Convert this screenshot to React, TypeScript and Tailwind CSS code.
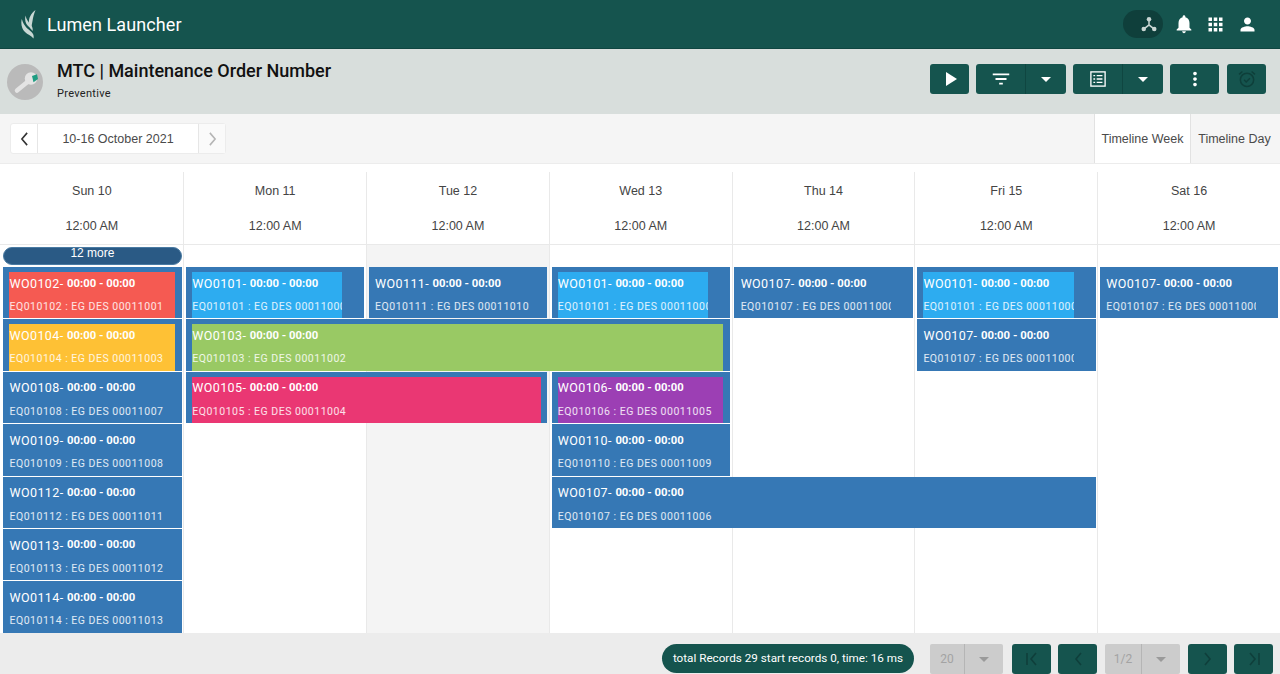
import React from 'react';

type Ev = {
  id: string;
  eq: string;
  pos: string;
  inner?: string;
  gap: string;
};

const days = ['Sun 10', 'Mon 11', 'Tue 12', 'Wed 13', 'Thu 14', 'Fri 15', 'Sat 16'];

const events: Ev[] = [
  { id: 'WO0102', eq: 'EQ010102 : EG DES 00011001', pos: 'col-start-1 row-start-2', inner: 'bg-[#f55a52]', gap: 'mr-[7px]' },
  { id: 'WO0101', eq: 'EQ010101 : EG DES 00011000', pos: 'col-start-2 row-start-2', inner: 'bg-[#2dacf0]', gap: 'mr-[22px]' },
  { id: 'WO0111', eq: 'EQ010111 : EG DES 00011010', pos: 'col-start-3 row-start-2', gap: 'mr-[7px]' },
  { id: 'WO0101', eq: 'EQ010101 : EG DES 00011000', pos: 'col-start-4 row-start-2', inner: 'bg-[#2dacf0]', gap: 'mr-[22px]' },
  { id: 'WO0107', eq: 'EQ010107 : EG DES 00011000', pos: 'col-start-5 row-start-2', gap: 'mr-[22px]' },
  { id: 'WO0101', eq: 'EQ010101 : EG DES 00011000', pos: 'col-start-6 row-start-2', inner: 'bg-[#2dacf0]', gap: 'mr-[22px]' },
  { id: 'WO0107', eq: 'EQ010107 : EG DES 00011000', pos: 'col-start-7 row-start-2', gap: 'mr-[22px]' },
  { id: 'WO0104', eq: 'EQ010104 : EG DES 00011003', pos: 'col-start-1 row-start-3', inner: 'bg-[#fec135]', gap: 'mr-[7px]' },
  { id: 'WO0103', eq: 'EQ010103 : EG DES 00011002', pos: 'col-start-2 col-span-3 row-start-3', inner: 'bg-[#99c964]', gap: 'mr-[6.500px]' },
  { id: 'WO0107', eq: 'EQ010107 : EG DES 00011000', pos: 'col-start-6 row-start-3', gap: 'mr-[22px]' },
  { id: 'WO0108', eq: 'EQ010108 : EG DES 00011007', pos: 'col-start-1 row-start-4', gap: 'mr-[7px]' },
  { id: 'WO0105', eq: 'EQ010105 : EG DES 00011004', pos: 'col-start-2 col-span-2 row-start-4', inner: 'bg-[#ea3773]', gap: 'mr-[6.500px]' },
  { id: 'WO0106', eq: 'EQ010106 : EG DES 00011005', pos: 'col-start-4 row-start-4', inner: 'bg-[#9c3fb4]', gap: 'mr-[6.500px]' },
  { id: 'WO0109', eq: 'EQ010109 : EG DES 00011008', pos: 'col-start-1 row-start-5', gap: 'mr-[7px]' },
  { id: 'WO0110', eq: 'EQ010110 : EG DES 00011009', pos: 'col-start-4 row-start-5', gap: 'mr-[6.500px]' },
  { id: 'WO0112', eq: 'EQ010112 : EG DES 00011011', pos: 'col-start-1 row-start-6', gap: 'mr-[7px]' },
  { id: 'WO0107', eq: 'EQ010107 : EG DES 00011006', pos: 'col-start-4 col-span-3 row-start-6', gap: 'mr-[6.500px]' },
  { id: 'WO0113', eq: 'EQ010113 : EG DES 00011012', pos: 'col-start-1 row-start-7', gap: 'mr-[7px]' },
  { id: 'WO0114', eq: 'EQ010114 : EG DES 00011013', pos: 'col-start-1 row-start-8', gap: 'mr-[7px]' },
];

const columns = [
  'col-start-1',
  'col-start-2 border-l',
  'col-start-3 border-l bg-[#f4f4f4]',
  'col-start-4 border-l',
  'col-start-5 border-l',
  'col-start-6 border-l',
  'col-start-7 border-l',
];

function Icon({ d, className }: { d: string; className: string }) {
  return (
    <svg viewBox="0 0 24 24" className={className} fill="currentColor">
      <path d={d} />
    </svg>
  );
}

function Caret() {
  return <div className="h-0 w-0 border-x-[5px] border-t-[5px] border-x-transparent border-t-white" />;
}

function EventBar({ ev }: { ev: Ev }) {
  return (
    <div className={`${ev.pos} z-10 mb-px ml-[2.7px] mr-[1.700px] min-w-0 bg-[#3678b5] pl-[6.300px] pt-[5px]`}>
      <div className={`${ev.gap} ${ev.inner ?? ''} h-full overflow-hidden whitespace-nowrap text-white`}>
        <div className="mt-[4px] flex h-[16px] items-center text-[12.5px] tracking-[0.4px]">
          <span>{ev.id}-&nbsp;</span>
          <span className="text-[11.3px] font-bold tracking-normal">00:00 - 00:00</span>
        </div>
        <div className="mt-[8px] text-[10.5px] leading-[14px] tracking-[0.5px] text-white/85">{ev.eq}</div>
      </div>
    </div>
  );
}

function PageButton({ children, className = 'w-[39px]' }: { children: React.ReactNode; className?: string }) {
  return (
    <div className={`${className} flex h-[30px] items-center justify-center rounded-[3px] bg-[#15544e] text-[#0f3f3b]`}>
      {children}
    </div>
  );
}

function PageSelect({ label, className }: { label: string; className: string }) {
  return (
    <div className={`${className} flex h-[30px] items-center rounded-[2px] bg-[#cccccc] text-[12px] text-[#a3a3a3]`}>
      <div className="flex h-full flex-1 items-center justify-center border-r border-[#b5b5b5]">{label}</div>
      <div className="flex w-[38px] justify-center">
        <div className="h-0 w-0 border-x-[5px] border-t-[5px] border-x-transparent border-t-[#9a9a9a]" />
      </div>
    </div>
  );
}

export default function App() {
  return (
    <div className="flex h-[674px] w-[1280px] flex-col overflow-hidden bg-white font-['Roboto',sans-serif]">
      {/* top bar */}
      <header className="flex h-[49px] shrink-0 items-center justify-between border-b border-[#0f4641] bg-[#15544e] pl-[21px] pr-[22px] text-white">
        <div className="flex items-center gap-[10px]">
          <svg viewBox="0 0 16 29" className="h-[29px] w-[16px]" fill="#c8d8d4">
            <path d="M14.500 0C10 3.500 7.500 8 8 13c.3 2 1 4 2 6 .5-3 1-5 1.500-8 .5-4 1.500-7 3-11z" />
            <path d="M.8 9C-.5 14 1 19 4 22c2.500 2.500 6 3.500 8.500 6.500.5-2.500 0-4.500-2-6.500C7.500 19 3 17 .8 9z" />
            <path d="M4.500 5.500C3.500 10 4.500 13.500 7 16c1.500 1.500 3 2.500 4.500 5 .5-2 0-4-1.500-6-2.500-3-4.500-5-5.500-9.500z" />
          </svg>
          <span className="text-[18px] tracking-[0.1px]">Lumen Launcher</span>
        </div>
        <div className="flex items-center">
          <div className="flex h-[28px] w-[40px] items-center justify-end rounded-full bg-[#0f3f3b] pr-[5px] text-[#c9d6d3]">
            <svg viewBox="0 0 24 24" className="h-[18px] w-[18px]" fill="currentColor">
              <circle cx="12" cy="5.500" r="3" />
              <circle cx="5" cy="18.500" r="3" />
              <circle cx="19" cy="18.500" r="3" />
              <path d="M11 8h2v4.500l5.500 4.500-1.300 1.500L12 14.500l-5.200 4L5.500 17l5.500-4.500z" />
            </svg>
          </div>
          <Icon
            className="ml-[10px] h-[22px] w-[22px]"
            d="M12 22c1.100 0 2-.9 2-2h-4c0 1.100.89 2 2 2zm6-6v-5c0-3.070-1.640-5.640-4.500-6.320V4c0-.83-.67-1.500-1.500-1.500s-1.500.67-1.500 1.500v.68C7.630 5.360 6 7.920 6 11v5l-2 2v1h16v-1l-2-2z"
          />
          <Icon
            className="ml-[10px] h-[21px] w-[21px]"
            d="M4 8h4V4H4v4zm6 12h4v-4h-4v4zm-6 0h4v-4H4v4zm0-6h4v-4H4v4zm6 0h4v-4h-4v4zm6-10v4h4V4h-4zm-6 4h4V4h-4v4zm6 6h4v-4h-4v4zm0 6h4v-4h-4v4z"
          />
          <Icon
            className="ml-[11px] h-[21px] w-[21px]"
            d="M12 12c2.210 0 4-1.790 4-4s-1.790-4-4-4-4 1.790-4 4 1.790 4 4 4zm0 2c-2.670 0-8 1.340-8 4v2h16v-2c0-2.660-5.330-4-8-4z"
          />
        </div>
      </header>

      {/* title toolbar */}
      <div className="flex h-[65px] shrink-0 items-center justify-between bg-[#d8dedc] pl-[7px] pr-[14px]">
        <div className="flex items-center gap-[14px]">
          <div className="flex h-[36px] w-[36px] items-center justify-center rounded-full bg-[#bababa]">
            <svg viewBox="0 0 36 36" className="h-[36px] w-[36px]">
              <path d="M10 26.500l11-9" stroke="#e4e4e4" strokeWidth="4.500" strokeLinecap="round" fill="none" />
              <circle cx="24" cy="14.500" r="6.200" fill="#e4e4e4" />
              <path d="M25 12l5-1.800 1 4.800-4.500 3.200z" fill="#1f9d82" />
            </svg>
          </div>
          <div className="-mt-[2px]">
            <div className="text-[18px] font-medium leading-[22px] text-[#111]">MTC | Maintenance Order Number</div>
            <div className="mt-[5px] text-[11px] leading-[14px] tracking-[0.3px] text-[#222]">Preventive</div>
          </div>
        </div>
        <div className="mb-[5px] flex items-center gap-[7px] text-white">
          <div className="flex h-[30px] w-[39px] items-center justify-center rounded-[3px] bg-[#15544e]">
            <Icon className="h-[24px] w-[24px]" d="M8 5v14l11-7z" />
          </div>
          <div className="flex h-[30px] w-[90px] items-center rounded-[3px] bg-[#15544e]">
            <div className="flex h-full w-[50px] items-center justify-center border-r border-[#0f4641]">
              <Icon className="h-[22px] w-[22px]" d="M10 18h4v-2h-4v2zM3 6v2h18V6H3zm3 7h12v-2H6v2z" />
            </div>
            <div className="flex flex-1 justify-center"><Caret /></div>
          </div>
          <div className="flex h-[30px] w-[90px] items-center rounded-[3px] bg-[#15544e]">
            <div className="flex h-full w-[50px] items-center justify-center border-r border-[#0f4641]">
              <svg viewBox="0 0 18 18" className="h-[16px] w-[16px]" fill="none" stroke="white" strokeWidth="1.500">
                <rect x="1" y="1" width="16" height="16" />
                <path d="M7.500 5.200H14M7.500 9H14M7.500 12.800H14M3.800 5.200h2M3.800 9h2M3.800 12.800h2" />
              </svg>
            </div>
            <div className="flex flex-1 justify-center"><Caret /></div>
          </div>
          <div className="flex h-[30px] w-[49px] items-center justify-center rounded-[3px] bg-[#15544e]">
            <Icon className="h-[22px] w-[22px]" d="M12 8c1.100 0 2-.9 2-2s-.9-2-2-2-2 .9-2 2 .9 2 2 2zm0 2c-1.100 0-2 .9-2 2s.9 2 2 2 2-.9 2-2-.9-2-2-2zm0 6c-1.100 0-2 .9-2 2s.9 2 2 2 2-.9 2-2-.9-2-2-2z" />
          </div>
          <div className="ml-px flex h-[30px] w-[39px] items-center justify-center rounded-[3px] bg-[#15544e] text-[#0e3f3a]">
            <svg viewBox="0 0 24 24" className="h-[20px] w-[20px]" fill="none" stroke="currentColor" strokeWidth="1.800">
              <circle cx="12" cy="13" r="8" />
              <path d="M8.500 13l2.500 2.500 4.500-4.500M2.500 6.500L6.500 3M21.500 6.500L17.500 3" />
            </svg>
          </div>
        </div>
      </div>

      {/* date navigation and view tabs */}
      <div className="flex h-[49px] shrink-0 items-stretch justify-between bg-[#f5f5f5] font-['Liberation_Sans',sans-serif] text-[12.5px] text-[#4a4a4a]">
        <div className="ml-[10px] mt-[9px] flex h-[31px] w-[216px] items-center rounded-[3px] border border-[#ececec] bg-white">
          <div className="flex h-full w-[27px] items-center justify-center border-r border-[#e6e6e6] text-[#333]">
            <svg viewBox="0 0 10 16" className="h-[14px] w-[9px]" fill="none" stroke="currentColor" strokeWidth="1.800"><path d="M8 1L2 8l6 7" /></svg>
          </div>
          <div className="flex-1 pt-px text-center">10-16 October 2021</div>
          <div className="flex h-full w-[27px] items-center justify-center border-l border-[#e6e6e6] bg-[#fafafa] text-[#b5b5b5]">
            <svg viewBox="0 0 10 16" className="h-[14px] w-[9px]" fill="none" stroke="currentColor" strokeWidth="1.800"><path d="M2 1l6 7-6 7" /></svg>
          </div>
        </div>
        <div className="flex">
          <div className="flex w-[97px] items-center justify-center border-x border-[#e2e2e2] bg-white pt-px">Timeline Week</div>
          <div className="flex w-[89px] items-center justify-center pr-[2px] pt-px">Timeline Day</div>
        </div>
      </div>

      {/* calendar */}
      <div className="h-[9px] shrink-0 border-t border-[#ececec] bg-white" />
      <div className="grid h-[73px] shrink-0 grid-cols-7 border-b border-[#e9e9e9] pl-[0.5px] font-['Liberation_Sans',sans-serif] text-[12.5px] text-[#444]">
        {days.map((day, i) => (
          <div key={day} className={`${i > 0 ? 'border-l' : ''} flex flex-col items-center border-[#e9e9e9]`}>
            <div className="mt-[11px] leading-[16px]">{day}</div>
            <div className="mt-[19px] leading-[16px]">12:00 AM</div>
          </div>
        ))}
      </div>
      <div className="grid min-h-0 flex-1 grid-cols-7 grid-rows-[22px_repeat(7,52.4px)] overflow-hidden pl-[0.5px]">
        {columns.map((col) => (
          <div key={col} className={`${col} row-span-8 row-start-1 border-[#e9e9e9]`} />
        ))}
        <div className="z-10 col-start-1 row-start-1 ml-[2.5px] mr-[1.500px] mt-[2px] h-[18px] rounded-full border border-[#4a7ba3] bg-[#2a5a85] text-center font-['Liberation_Sans',sans-serif] text-[12px] leading-[11px] text-white">
          12 more
        </div>
        {events.map((ev) => (
          <EventBar key={ev.eq + ev.pos} ev={ev} />
        ))}
      </div>

      {/* footer pager */}
      <footer className="flex h-[41px] shrink-0 items-start justify-end bg-[#ececec] pr-[7px] pt-[11px]">
        <div className="mr-[16px] flex h-[29px] w-[252px] items-center justify-center rounded-full bg-[#15544e] text-[11.7px] text-white">
          total Records 29 start records 0, time: 16 ms
        </div>
        <PageSelect label="20" className="mr-[9px] w-[73px]" />
        <PageButton>
          <svg viewBox="0 0 18 14" className="h-[14px] w-[18px]" fill="none" stroke="currentColor" strokeWidth="1.600"><path d="M4 1v12M13 1L8 7l5 6" /></svg>
        </PageButton>
        <div className="w-[7px]" />
        <PageButton>
          <svg viewBox="0 0 10 14" className="h-[14px] w-[10px]" fill="none" stroke="currentColor" strokeWidth="1.600"><path d="M8 1L3 7l5 6" /></svg>
        </PageButton>
        <div className="w-[8px]" />
        <PageSelect label="1/2" className="mr-[8px] w-[75px]" />
        <PageButton>
          <svg viewBox="0 0 10 14" className="h-[14px] w-[10px]" fill="none" stroke="currentColor" strokeWidth="1.600"><path d="M2 1l5 6-5 6" /></svg>
        </PageButton>
        <div className="w-[7px]" />
        <PageButton>
          <svg viewBox="0 0 18 14" className="h-[14px] w-[18px]" fill="none" stroke="currentColor" strokeWidth="1.600"><path d="M14 1v12M5 1l5 6-5 6" /></svg>
        </PageButton>
      </footer>
    </div>
  );
}
